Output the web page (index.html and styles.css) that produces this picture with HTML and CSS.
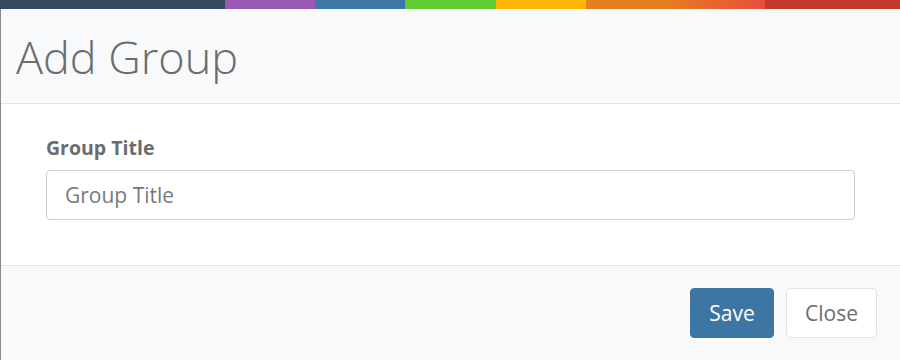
FILE: index.html
```html
<!DOCTYPE html>
<html lang="en">
<head>
<meta charset="utf-8">
<title>Add Group</title>
<link rel="stylesheet" href="styles.css">
</head>
<body>
<div class="page">
  <div class="colorbar">
    <span class="seg seg-slate"></span>
    <span class="seg seg-purple"></span>
    <span class="seg seg-blue"></span>
    <span class="seg seg-green"></span>
    <span class="seg seg-yellow"></span>
    <span class="seg seg-orange"></span>
    <span class="seg seg-red"></span>
  </div>
  <div class="modal">
    <div class="modal-header">
      <h1 class="modal-title">Add Group</h1>
    </div>
    <div class="modal-body">
      <label class="field-label" for="group-title">Group Title</label>
      <input class="field-input" id="group-title" type="text" placeholder="Group Title">
    </div>
    <div class="modal-footer">
      <button class="btn btn-primary" type="button">Save</button>
      <button class="btn btn-default" type="button">Close</button>
    </div>
  </div>
</div>
</body>
</html>
```

FILE: styles.css
```css
html, body {
  margin: 0;
  padding: 0;
  height: 100%;
}

body {
  font-family: "Open Sans", "Noto Sans", sans-serif;
  background: #f8f9fa;
}

.page {
  display: flex;
  flex-direction: column;
  height: 360px;
  width: 900px;
}

.colorbar {
  display: flex;
  height: 9px;
  flex: none;
}

.seg { display: block; height: 100%; }
.seg-slate { width: 225px; background: #34495e; }
.seg-purple { width: 90px; background: #9b59b6; }
.seg-blue { width: 90px; background: #3d77a5; }
.seg-green { width: 91px; background: #62cb31; }
.seg-yellow { width: 90px; background: #ffb606; }
.seg-orange { width: 179px; background: linear-gradient(to right, #e67e22 0%, #e67e22 45%, #e74c3c 100%); }
.seg-red { flex: 1; background: #c0392b; }

.modal {
  flex: 1;
  display: flex;
  flex-direction: column;
  border-left: 1px solid #8a8a8a;
}

.modal-header {
  height: 95px;
  flex: none;
  box-sizing: border-box;
  background: #f8f9fa;
  border-bottom: 1px solid #e1e2e3;
  padding: 0 0 0 15px;
  display: flex;
  align-items: center;
}

.modal-title {
  margin: 0;
  font-family: "Open Sans", sans-serif;
  font-weight: 300;
  font-size: 45px;
  line-height: 1;
  color: #6a6c6f;
}

.modal-body {
  background: #ffffff;
  height: 162px;
  flex: none;
  box-sizing: border-box;
  padding: 32px 45px 0 45px;
  border-bottom: 1px solid #e1e2e3;
  display: flex;
  flex-direction: column;
  align-items: flex-start;
}

.field-label {
  font-weight: 700;
  font-size: 19.5px;
  line-height: 24px;
  color: #6a6c6f;
  margin-bottom: 10px;
}

.field-input {
  width: 809px;
  height: 50px;
  box-sizing: border-box;
  border: 1px solid #cfcfcf;
  border-radius: 4px;
  padding: 0 18px;
  font-family: "Open Sans", sans-serif;
  font-size: 21px;
  color: #6a6c6f;
  background: #fff;
  outline: none;
}

.field-input::placeholder {
  color: #77797c;
}

.modal-footer {
  flex: 1;
  background: #f8f9fa;
  display: flex;
  justify-content: flex-end;
  align-items: flex-start;
  gap: 12px;
  padding: 22px 23px 0 0;
}

.btn {
  height: 50px;
  box-sizing: border-box;
  border-radius: 4px;
  font-family: "Open Sans", sans-serif;
  font-size: 21px;
  padding: 0;
  cursor: pointer;
}

.btn-primary {
  background: #3e76a3;
  border: 1px solid #3e76a3;
  color: #ffffff;
  width: 84px;
}

.btn-default {
  background: #ffffff;
  border: 1px solid #e2e3e4;
  color: #6a6c6f;
  width: 91px;
}
```
